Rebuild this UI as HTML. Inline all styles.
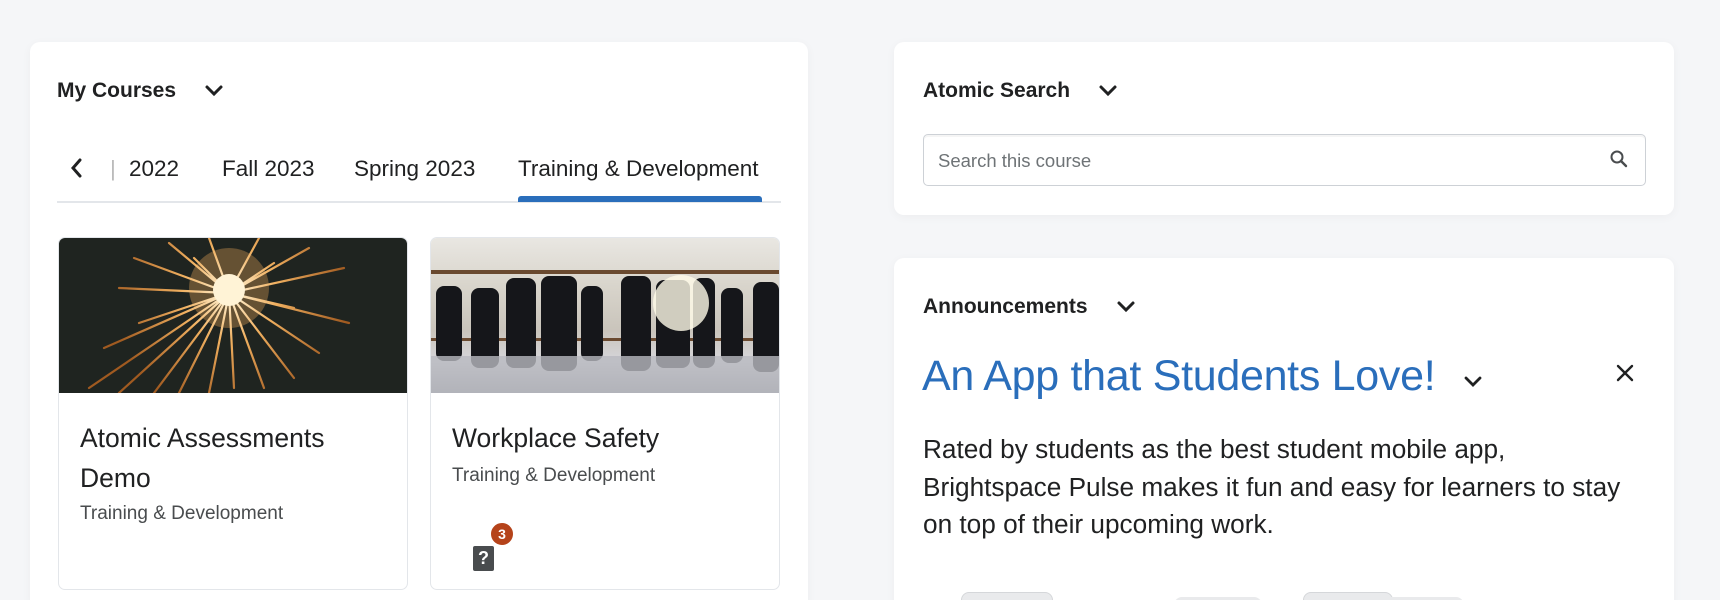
<!DOCTYPE html>
<html><head><meta charset="utf-8"><style>
*{box-sizing:border-box;margin:0;padding:0}
html,body{width:1720px;height:600px;overflow:hidden}
body{background:#f5f6f8;font-family:"Liberation Sans",sans-serif;color:#202122;position:relative}
.card{position:absolute;background:#fff;border-radius:10px;box-shadow:0 2px 10px rgba(0,0,0,.04)}
.h{position:absolute;font-weight:bold;font-size:21px;color:#202122}
.chev{position:absolute}
.tab{position:absolute;top:156px;font-size:22.5px;color:#202122}
.cc{position:absolute;top:237px;width:350px;height:353px;border:1px solid #e3e6ea;border-radius:7px;overflow:hidden;background:#fff}
.img{height:155px;position:relative;overflow:hidden}
.ct{position:absolute;left:21px;font-size:26.5px;line-height:40px;color:#202122}
.cs{position:absolute;left:21px;font-size:19px;color:#494c4e}
</style></head><body>
<div class="card" style="left:30px;top:42px;width:778px;height:570px"></div>
<div class="h" style="left:57px;top:79px">My Courses</div>
<svg class="chev" style="left:204px;top:84px" width="20" height="14" viewBox="0 0 20 14"><path d="M3 3l7 7 7-7" stroke="#202122" stroke-width="3" fill="none" stroke-linecap="round"/></svg>
<svg style="position:absolute;left:70px;top:157px" width="14" height="22" viewBox="0 0 14 22"><path d="M10 3L3 11l7 8" stroke="#202122" stroke-width="3" fill="none" stroke-linecap="round"/></svg>
<div class="tab" style="left:110px;color:#bbb">|</div>
<div class="tab" style="left:129px">2022</div>
<div class="tab" style="left:222px">Fall 2023</div>
<div class="tab" style="left:354px">Spring 2023</div>
<div class="tab" style="left:518px">Training &amp; Development</div>
<div style="position:absolute;left:57px;top:201px;width:724px;height:2px;background:#e3e6ea"></div>
<div style="position:absolute;left:518px;top:196px;width:244px;height:6px;background:#2a6ebb;border-radius:3px 3px 0 0"></div>

<div class="cc" style="left:58px">
<div class="img" style="background:#1f2420">
<svg width="350" height="155" style="position:absolute;left:0;top:0">
<defs><radialGradient id="g" cx="170" cy="55" r="120" gradientUnits="userSpaceOnUse"><stop offset="0" stop-color="#fff6dc"/><stop offset=".4" stop-color="#f0b060"/><stop offset="1" stop-color="#a05a20"/></radialGradient></defs>
<circle cx="170" cy="50" r="40" fill="#e9a55a" opacity=".35"/>
<g stroke="url(#g)" stroke-width="2.2" stroke-linecap="round">
<path d="M170 55L30 150M170 55L60 155M170 55L95 155M170 55L120 155M170 55L150 155M170 55L175 150M170 55L205 150M170 55L235 140M170 55L60 50M170 55L75 20M170 55L110 5M170 55L150 0M170 55L200 0M170 55L250 10M170 55L285 30M170 55L290 85M170 55L260 115M170 55L45 110M170 55L80 85M170 55L235 70M170 55L215 25M170 55L135 20"/>
</g>
<circle cx="170" cy="52" r="16" fill="#fff3d6"/>
</svg></div>
<div class="ct" style="top:180px">Atomic Assessments<br>Demo</div>
<div class="cs" style="top:265px">Training &amp; Development</div>
</div>
<div class="cc" style="left:430px">
<div class="img" style="background:linear-gradient(180deg,#e9e7e2 0%,#d9d5cc 30%,#c9c4bb 60%,#d6d6da 80%,#9a9ba2 100%)">
<svg width="350" height="155" style="position:absolute;left:0;top:0">
<rect x="0" y="32" width="350" height="4" fill="#6a4a30"/>
<rect x="0" y="100" width="350" height="3" fill="#6a4a30"/>
<g fill="#15161a">
<rect x="5" y="48" width="26" height="75" rx="8"/><rect x="40" y="50" width="28" height="80" rx="8"/><rect x="75" y="40" width="30" height="90" rx="8"/><rect x="110" y="38" width="36" height="95" rx="8"/><rect x="150" y="48" width="22" height="75" rx="8"/><rect x="190" y="38" width="30" height="95" rx="8"/><rect x="225" y="42" width="34" height="88" rx="8"/><rect x="262" y="40" width="22" height="90" rx="8"/><rect x="290" y="50" width="22" height="75" rx="8"/><rect x="322" y="44" width="26" height="90" rx="8"/>
</g>
<rect x="0" y="118" width="350" height="37" fill="#b8b9bf" opacity=".8"/>
<circle cx="250" cy="65" r="28" fill="#fffbe8" opacity=".8"/>
</svg></div>
<div class="ct" style="top:180px">Workplace Safety</div>
<div class="cs" style="top:227px">Training &amp; Development</div>
<div style="position:absolute;left:42px;top:308px;width:21px;height:25px;background:#494c4e;border-radius:2px;color:#fff;font-weight:bold;font-size:18px;text-align:center;line-height:25px">?</div>
<div style="position:absolute;left:58px;top:283px;width:26px;height:26px;background:#b5431a;border-radius:50%;border:2px solid #fff;color:#fff;font-weight:bold;font-size:14px;text-align:center;line-height:22px">3</div>
</div>

<div class="card" style="left:894px;top:42px;width:780px;height:173px"></div>
<div class="h" style="left:923px;top:79px">Atomic Search</div>
<svg class="chev" style="left:1098px;top:84px" width="20" height="14" viewBox="0 0 20 14"><path d="M3 3l7 7 7-7" stroke="#202122" stroke-width="3" fill="none" stroke-linecap="round"/></svg>
<div style="position:absolute;left:923px;top:134px;width:723px;height:52px;border:1px solid #cdd1d6;border-radius:5px;box-shadow:inset 0 2px 0 rgba(0,0,0,.04)"></div>
<div style="position:absolute;left:938px;top:150px;font-size:18.5px;color:#6e7376">Search this course</div>
<svg style="position:absolute;left:1609px;top:149px" width="20" height="20" viewBox="0 0 20 20"><circle cx="8" cy="8" r="5.5" stroke="#494c4e" stroke-width="2" fill="none"/><path d="M12 12l5 5" stroke="#494c4e" stroke-width="2.4" stroke-linecap="round"/></svg>

<div class="card" style="left:894px;top:258px;width:780px;height:360px"></div>
<div class="h" style="left:923px;top:295px">Announcements</div>
<svg class="chev" style="left:1116px;top:300px" width="20" height="14" viewBox="0 0 20 14"><path d="M3 3l7 7 7-7" stroke="#202122" stroke-width="3" fill="none" stroke-linecap="round"/></svg>
<div style="position:absolute;left:922px;top:352px;font-size:43px;color:#2a6ebb;letter-spacing:-.3px">An App that Students Love!</div>
<svg style="position:absolute;left:1463px;top:375px" width="20" height="14" viewBox="0 0 20 14"><path d="M3 3l7 7 7-7" stroke="#202122" stroke-width="2.8" fill="none" stroke-linecap="round"/></svg>
<svg style="position:absolute;left:1614px;top:362px" width="22" height="22" viewBox="0 0 22 22"><path d="M4 4l14 14M18 4L4 18" stroke="#202122" stroke-width="2.4" stroke-linecap="round"/></svg>
<div style="position:absolute;left:923px;top:431px;font-size:26.2px;line-height:37.5px;color:#202122;width:900px;white-space:nowrap;letter-spacing:0">Rated by students as the best student mobile app,<br>Brightspace Pulse makes it fun and easy for learners to stay<br>on top of their upcoming work.</div>
<div style="position:absolute;left:961px;top:592px;width:92px;height:20px;background:#e9eaec;border:1px solid #d5d7da;border-radius:8px"></div>
<div style="position:absolute;left:1174px;top:597px;width:88px;height:20px;background:#e9eaec;border-radius:8px"></div>
<div style="position:absolute;left:1303px;top:592px;width:90px;height:20px;background:#e9eaec;border:1px solid #d5d7da;border-radius:8px"></div>
<div style="position:absolute;left:1372px;top:597px;width:92px;height:20px;background:#e9eaec;border-radius:8px"></div>
</body></html>
